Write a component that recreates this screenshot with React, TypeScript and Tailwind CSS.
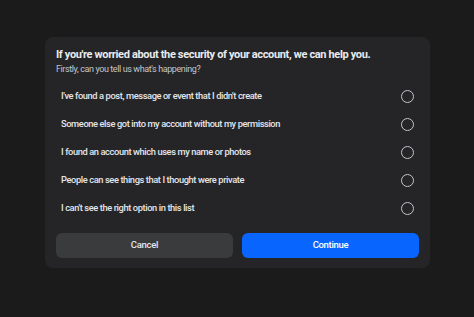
const options = [
  "I've found a post, message or event that I didn't create",
  'Someone else got into my account without my permission',
  'I found an account which uses my name or photos',
  'People can see things that I thought were private',
  "I can't see the right option in this list",
];

export default function App() {
  return (
    <div
      className="w-[474px] h-[317px] bg-[#1b1b1c] pt-[37px] pl-[45px]"
      style={{ fontFamily: 'Roboto, "Liberation Sans", sans-serif' }}
    >
      <div className="w-[385px] rounded-[8px] bg-[#252527] px-[11px] pt-[10px] pb-[10px]">
        <h1 className="text-[11px] leading-[15px] font-bold tracking-[-0.35px] text-[#e9ebee] whitespace-nowrap">
          If you're worried about the security of your account, we can help you.
        </h1>
        <p className="text-[9px] leading-[14px] tracking-[-0.4px] text-[#c4c6ca] whitespace-nowrap">
          Firstly, can you tell us what's happening?
        </p>

        <div className="mt-[6px] flex flex-col">
          {options.map(label => (
            <label key={label} className="h-[28px] px-[5px] flex items-center justify-between cursor-pointer">
              <span className="text-[9.3px] font-medium tracking-[-0.4px] text-[#e4e6eb] whitespace-nowrap">{label}</span>
              <span className="w-[13px] h-[13px] rounded-full border-[1.5px] border-[#c4c6ca]" />
            </label>
          ))}
        </div>

        <div className="mt-[11px] flex gap-[9px]">
          <button className="flex-1 h-[25px] rounded-[6px] bg-[#3a3b3c] text-[9.5px] font-medium tracking-[-0.3px] text-[#e4e6eb]">
            Cancel
          </button>
          <button className="flex-1 h-[25px] rounded-[6px] bg-[#0866ff] text-[9.5px] font-medium tracking-[-0.3px] text-white">
            Continue
          </button>
        </div>
      </div>
    </div>
  );
}
